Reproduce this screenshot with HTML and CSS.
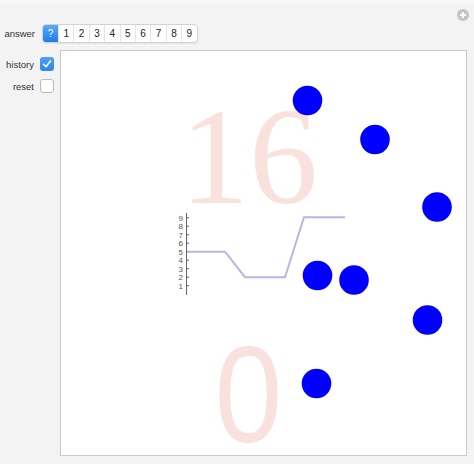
FILE: index.html
```html
<!DOCTYPE html>
<html>
<head>
<meta charset="utf-8">
<link rel="stylesheet" href="styles.css">
</head>
<body>
<div class="app">
  <div class="plus" aria-label="add"></div>
  <div class="row-answer">
    <span class="lbl">answer</span>
    <div class="seg">
      <span class="btn sel">?</span><span class="btn">1</span><span class="btn">2</span><span class="btn">3</span><span class="btn">4</span><span class="btn">5</span><span class="btn">6</span><span class="btn">7</span><span class="btn">8</span><span class="btn">9</span>
    </div>
  </div>
  <div class="main">
    <div class="side">
      <div class="opt"><span class="lbl">history</span><span class="cb on"><svg viewBox="0 0 14 14" width="14" height="14"><path d="M3.5 7.3 L6 9.8 L10.6 3.8" fill="none" stroke="#fff" stroke-width="1.5" stroke-linecap="round" stroke-linejoin="round"/></svg></span></div>
      <div class="opt"><span class="lbl">reset</span><span class="cb"></span></div>
    </div>
    <div class="panel">
      <svg class="canvas" viewBox="61 51 405 404" width="405" height="404">
        <text x="249" y="203" class="big16">16</text>
        <text x="0" y="0" class="big0" transform="translate(248.5 442) scale(0.88 1)">0</text>
        <line x1="186.5" y1="213" x2="186.5" y2="295" stroke="#666" stroke-width="1"/>
        <g class="ticks" stroke="#666" stroke-width="1">
          <line x1="187" y1="217.7" x2="189" y2="217.7"/>
          <line x1="187" y1="226.2" x2="189" y2="226.2"/>
          <line x1="187" y1="234.7" x2="189" y2="234.7"/>
          <line x1="187" y1="243.2" x2="189" y2="243.2"/>
          <line x1="187" y1="251.7" x2="189" y2="251.7"/>
          <line x1="187" y1="260.2" x2="189" y2="260.2"/>
          <line x1="187" y1="268.7" x2="189" y2="268.7"/>
          <line x1="187" y1="277.2" x2="189" y2="277.2"/>
          <line x1="187" y1="285.7" x2="189" y2="285.7"/>
        </g>
        <g class="axlbl">
          <text x="183" y="220.5">9</text>
          <text x="183" y="229">8</text>
          <text x="183" y="237.5">7</text>
          <text x="183" y="246">6</text>
          <text x="183" y="254.5">5</text>
          <text x="183" y="263">4</text>
          <text x="183" y="271.5">3</text>
          <text x="183" y="280">2</text>
          <text x="183" y="288.5">1</text>
        </g>
        <polyline points="187,251.7 225,251.7 245,277.2 285,277.2 304,217.2 345,217.2" fill="none" stroke="#aaaadf" stroke-opacity="0.85" stroke-width="2"/>
        <g fill="#0000ff">
          <circle cx="307.5" cy="100.5" r="14.8"/>
          <circle cx="375" cy="139.5" r="14.8"/>
          <circle cx="437" cy="207" r="14.8"/>
          <circle cx="317.5" cy="275.5" r="14.8"/>
          <circle cx="354" cy="280" r="14.8"/>
          <circle cx="427.5" cy="320" r="14.8"/>
          <circle cx="316.5" cy="383.5" r="14.8"/>
        </g>
      </svg>
    </div>
  </div>
</div>
</body>
</html>
```
FILE: styles.css
```css
html, body {
  margin: 0;
  padding: 0;
}
body {
  background: #f4f4f4;
  font-family: "Liberation Sans", Arial, sans-serif;
  color: #333;
}
.app {
  position: relative;
  width: 474px;
  height: 464px;
  box-sizing: border-box;
  padding-top: 24px;
  background: linear-gradient(#fafafa, #f3f3f3 6px, #f3f3f3);
}
.plus {
  position: absolute;
  left: 457px;
  top: 9px;
  width: 12px;
  height: 12px;
  border-radius: 50%;
  background: #c4c4c4;
}
.plus::before, .plus::after {
  content: "";
  position: absolute;
  background: #fff;
}
.plus::before {
  left: 3px;
  top: 5px;
  width: 6px;
  height: 2px;
}
.plus::after {
  left: 5px;
  top: 3px;
  width: 2px;
  height: 6px;
}
.row-answer {
  display: flex;
  align-items: center;
  height: 19px;
}
.lbl {
  font-size: 9.5px;
  color: #333;
  text-align: right;
}
.row-answer .lbl {
  width: 35px;
  margin-right: 7px;
}
.seg {
  display: flex;
  height: 19px;
  box-sizing: border-box;
  border: 1px solid #d2d2d2;
  border-radius: 4px;
  background: #fff;
  overflow: hidden;
  box-shadow: 0 1px 1px rgba(0,0,0,0.06);
}
.btn {
  width: 15.4px;
  display: flex;
  align-items: center;
  justify-content: center;
  font-size: 10px;
  color: #222;
  border-left: 1px solid #e4e4e4;
  box-sizing: border-box;
}
.btn:first-child {
  border-left: none;
}
.btn.sel {
  background: linear-gradient(#5aaaf8, #1f7be8);
  color: #fff;
  width: 15px;
}
.main {
  display: flex;
  margin-top: 7px;
}
.side {
  width: 60px;
  padding-top: 7px;
  display: flex;
  flex-direction: column;
  gap: 8px;
}
.opt {
  display: flex;
  align-items: center;
  height: 14px;
}
.opt .lbl {
  width: 34px;
  margin-right: 6px;
}
.cb {
  width: 14px;
  height: 14px;
  box-sizing: border-box;
  border: 1px solid #b8b8b8;
  border-radius: 3px;
  background: #fff;
  display: block;
}
.cb.on {
  border: none;
  background: linear-gradient(#4d9ff5, #2f86ec);
}
.cb svg {
  display: block;
}
.panel {
  width: 407px;
  height: 406px;
  box-sizing: border-box;
  border: 1px solid #c9c9c9;
  background: #fff;
}
.canvas {
  display: block;
}
.big16 {
  font-family: "Liberation Serif", "Times New Roman", serif;
  font-size: 138px;
  fill: #f9e2de;
  text-anchor: middle;
}
.big0 {
  font-family: "Liberation Sans", Arial, sans-serif;
  font-size: 138px;
  fill: #f9e2de;
  text-anchor: middle;
}
.axlbl text {
  font-family: "Liberation Sans", Arial, sans-serif;
  font-size: 8px;
  fill: #555;
  text-anchor: end;
}
```
